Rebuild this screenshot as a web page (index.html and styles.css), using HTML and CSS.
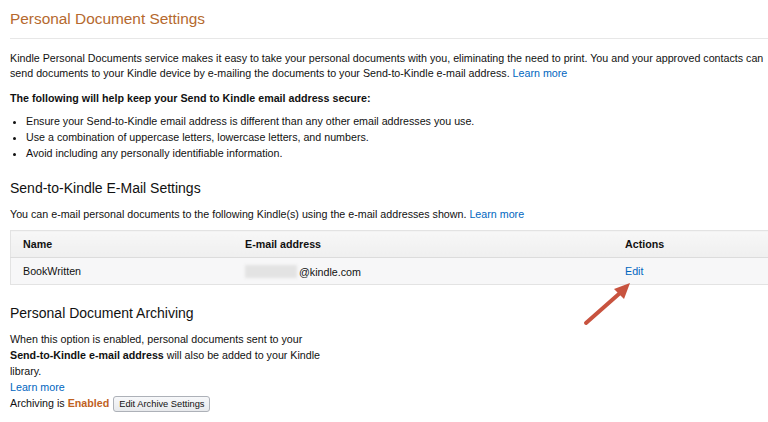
FILE: index.html
```html
<!DOCTYPE html>
<html lang="en">
<head>
    <meta charset="UTF-8">
    <title>Personal Document Settings</title>
    <link rel="stylesheet" href="styles.css">
</head>
<body>
    <div class="page">
        <h1>Personal Document Settings</h1>
        <p class="intro">Kindle Personal Documents service makes it easy to take your personal documents with you, eliminating the need to print. You and your approved contacts can send documents to your Kindle device by e-mailing the documents to your Send-to-Kindle e-mail address. <a href="#">Learn more</a></p>
        <p class="strong">The following will help keep your Send to Kindle email address secure:</p>
        <ul class="tips">
            <li>Ensure your Send-to-Kindle email address is different than any other email addresses you use.</li>
            <li>Use a combination of uppercase letters, lowercase letters, and numbers.</li>
            <li>Avoid including any personally identifiable information.</li>
        </ul>

        <h2>Send-to-Kindle E-Mail Settings</h2>
        <p class="note">You can e-mail personal documents to the following Kindle(s) using the e-mail addresses shown. <a href="#">Learn more</a></p>
        <div class="devices">
            <table>
                <thead>
                    <tr>
                        <th class="col-name">Name</th>
                        <th class="col-email">E-mail address</th>
                        <th>Actions</th>
                    </tr>
                </thead>
                <tbody>
                    <tr>
                        <td>BookWritten</td>
                        <td><span class="hidden-part"></span>@kindle.com</td>
                        <td><a href="#">Edit</a></td>
                    </tr>
                </tbody>
            </table>
            <svg class="pointer" width="60" height="50" viewBox="0 0 60 50">
                <line x1="8" y1="44" x2="42" y2="14" stroke="#c8533f" stroke-width="4" stroke-linecap="round"/>
                <polygon points="52,4 36,10 46,20" fill="#c8533f"/>
            </svg>
        </div>

        <h2 class="archive-title">Personal Document Archiving</h2>
        <div class="archive">
            <p>When this option is enabled, personal documents sent to your <b>Send-to-Kindle e-mail address</b> will also be added to your Kindle library.</p>
            <a href="#">Learn more</a>
            <div class="status">Archiving is <span class="enabled">Enabled</span> <button>Edit Archive Settings</button></div>
        </div>
    </div>
</body>
</html>
```

FILE: styles.css
```css
body {
    margin: 0;
    font-family: "Liberation Sans", Arial, sans-serif;
    font-size: 10.7px;
    color: #111;
    background: #fff;
}
a {
    color: #0066c0;
    text-decoration: none;
}
.page {
    padding: 8px 0 0 10px;
}
h1 {
    margin: 0;
    padding-bottom: 8px;
    border-bottom: 1px solid #e7e7e7;
    font-size: 15.4px;
    font-weight: normal;
    color: #b5692e;
    line-height: 22px;
}
.intro {
    margin: 12px 0 0;
    line-height: 15px;
}
.strong {
    margin: 9px 0 0;
    font-weight: bold;
    line-height: 16px;
}
.tips {
    margin: 7px 0 0;
    padding-left: 16px;
    line-height: 16px;
}
h2 {
    margin: 17px 0 0;
    font-size: 14px;
    font-weight: normal;
    color: #111;
    line-height: 20px;
}
.note {
    margin: 8px 0 0;
    line-height: 16px;
}
.devices {
    position: relative;
    margin-top: 8px;
}
table {
    width: 100%;
    border-collapse: collapse;
    border-left: 1px solid #e3e3e3;
}
th, td {
    text-align: left;
    padding: 0 12px;
    height: 26px;
}
th {
    font-weight: bold;
    background: linear-gradient(#f7f7f7, #efefef);
    border-top: 1px solid #e3e3e3;
    border-bottom: 1px solid #dcdcdc;
}
td {
    background: #f7f7f8;
    border-bottom: 1px solid #e3e3e3;
}
.col-name {
    width: 198px;
}
.col-email {
    width: 356px;
}
.hidden-part {
    display: inline-block;
    width: 52px;
    height: 13px;
    margin-right: 2px;
    vertical-align: -2px;
    background: #e3e3e3;
    filter: blur(1.5px);
}
.pointer {
    position: absolute;
    left: 568px;
    top: 49px;
}
.archive-title {
    margin-top: 18px;
}
.archive {
    width: 320px;
    margin-top: 8px;
    line-height: 16px;
}
.archive p {
    margin: 0;
}
.archive a {
    display: block;
}
.enabled {
    color: #c0621f;
    font-weight: bold;
}
.status button {
    font-family: "Liberation Sans", Arial, sans-serif;
    font-size: 9.3px;
    padding: 2px 5px;
    margin-left: 1px;
    border: 1px solid #adb1b8;
    border-radius: 3px;
    background: linear-gradient(#f7f8fa, #e7e9ec);
    color: #111;
}
```
